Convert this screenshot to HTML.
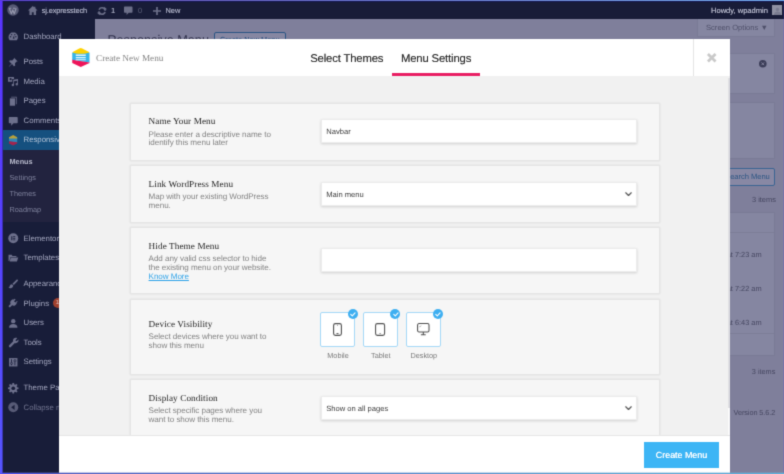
<!DOCTYPE html>
<html lang="en">
<head>
<meta charset="utf-8">
<title>Responsive Menu - Create New Menu</title>
<style>
*{box-sizing:border-box;margin:0;padding:0}
html,body{width:784px;height:474px;overflow:hidden}
body{position:relative;text-rendering:geometricPrecision;font-family:"Liberation Sans",sans-serif;background:#5a40f0;}
#all{position:absolute;left:-4px;top:-4px;width:792px;height:482px;background:#5a40f0;filter:url(#soft)}
#frame{position:absolute;left:4px;top:4px;width:784px;height:474px}
#edge-left{position:absolute;left:-4px;top:-4px;width:7px;height:482px;background:linear-gradient(180deg,#5a34ff 0%,#5642ff 50%,#5656ff 100%)}
#edge-left2{position:absolute;left:2px;top:1px;width:1px;height:472px;background:rgba(26,22,90,.45)}
#edge-top{position:absolute;left:-4px;top:-4px;width:792px;height:5px;background:linear-gradient(90deg,#5a38f0 0,#5a44c8 1.5%,#6458b8 20%,#6670c8 45%,#6e8cd7 72%,#70a8e8 100%)}
#edge-bot{position:absolute;left:-4px;top:473px;width:792px;height:5px;background:linear-gradient(90deg,#5656ff 0,#5860c0 8%,#5c80c8 40%,#64a0cd 72%,#68b0d8 100%)}
#edge-bot2{position:absolute;left:3px;top:472px;width:781px;height:1px;background:linear-gradient(90deg,#5860c0 0,#5c80c8 38%,#64a0cd 72%,#68b0d8 100%);opacity:.35}
.abs{position:absolute}
#shot{position:absolute;left:3px;top:1px;width:781px;height:472px;background:#7f7f9b;overflow:hidden}
svg{position:absolute;overflow:visible}
/* admin bar */
#adminbar{position:absolute;left:0;top:0;width:781px;height:18px;background:linear-gradient(180deg,#121458 0,#181c38 1.6px);color:#a1a4ba;text-shadow:0 0 .3px #a1a4ba;font-size:7.4px;line-height:18px;white-space:nowrap}
#adminbar span{position:absolute;top:.5px}
/* sidebar */
#sidebar{position:absolute;left:0;top:18px;width:91.5px;height:454px;background:#181d39;color:#a4a7bf;font-size:7.8px}
#sidebar .it{position:absolute;left:20.5px;height:12px;line-height:12px;white-space:nowrap}
#sidebar .sub{position:absolute;left:6.5px;font-size:7.3px;color:#7e819c;height:10px;line-height:10px}
#sidebar svg{left:5px;width:10.5px;height:10.5px;fill:#6d708c}
#submenu{position:absolute;left:0;top:131px;width:91.5px;height:72px;background:#22233f}
#current{position:absolute;left:0;top:110.5px;width:91.5px;height:20.5px;background:#15507f}
/* page behind */
.bg-text{position:absolute;color:#454660;font-size:7.6px;white-space:nowrap;line-height:10px}
.bg-text .pre{position:absolute;right:100%;top:0}
.bg-box{position:absolute;border:1px solid #7a7b96;background:#8586a1}
/* modal */
#modal{position:absolute;left:56px;top:38px;width:671px;height:434px;background:#f1f1f1;overflow:hidden}
#mhead{position:absolute;left:0;top:0;width:671px;height:37px;background:#fff}
#mtitle{position:absolute;left:37px;top:13px;font-family:"Liberation Serif",serif;font-size:9.2px;color:#858585;line-height:12px;white-space:nowrap}
.tab{position:absolute;top:12px;font-size:11.3px;color:#2c2c2c;text-shadow:0 0 .5px rgba(0,0,0,.45);line-height:16px;white-space:nowrap;letter-spacing:-.16px}
#uline{position:absolute;left:333px;top:34px;width:88px;height:3px;background:#e91e63}
#closebox{position:absolute;left:634px;top:0;width:37px;height:37px;border-left:1px solid #e4e4e4}
.card{position:absolute;left:71px;width:530px;background:#f6f6f6;border:1px solid #e5e5e5;box-shadow:0 0 2px rgba(0,0,0,.09)}
.ct{position:absolute;left:17.6px;font-family:"Liberation Serif",serif;font-size:9.2px;color:#262626;line-height:12px;white-space:nowrap;letter-spacing:.09px}
.cd{position:absolute;left:17.6px;font-size:8.1px;color:#828282;line-height:8.75px;white-space:nowrap;letter-spacing:-.07px}
.inp{position:absolute;left:189.6px;width:316px;height:24px;background:#fff;border:1px solid #ececec;box-shadow:0 1px 2.5px rgba(0,0,0,.16);font-size:7.6px;color:#3c3c3c;line-height:24px;padding-left:4.6px;white-space:nowrap}
.dev{position:absolute;top:11.5px;width:34.6px;height:35px;border:1px solid #a4d8f7;background:#fff;border-radius:2px}
.chk{position:absolute;right:-3.6px;top:-3.4px;width:10px;height:10px;border-radius:50%;background:#3eaff1}
.dl{position:absolute;top:51px;width:60px;text-align:center;font-size:7.3px;color:#7a7a7a;line-height:9px}
#mfoot{position:absolute;left:0;top:396px;width:671px;height:38px;background:#fff;border-top:1px solid #e6e6e6}
#btn{position:absolute;left:585px;top:5.5px;width:75px;height:26px;background:#3db5f5;color:#fff;font-size:8.9px;line-height:26px;text-shadow:0 0 .5px #fff;text-align:center;white-space:nowrap}
</style>
</head>
<body>
<svg width="0" height="0" style="position:absolute;left:0;top:0" aria-hidden="true"><defs><filter id="soft" x="0" y="0" width="100%" height="100%" color-interpolation-filters="sRGB"><feConvolveMatrix order="3" kernelMatrix="1 5 1 5 25 5 1 5 1" divisor="49" edgeMode="duplicate" preserveAlpha="true"/></filter></defs></svg>
<div id="all"><div id="frame">
<div id="shot">
  <!-- page behind overlay -->
  <div class="bg-text" style="left:104.4px;top:30px;font-size:12.7px;color:#2f304a;line-height:18px">Responsive Menu</div>
  <div class="abs" style="left:211px;top:30.6px;width:72px;height:14px;border:1px solid #2a5483;border-radius:2px;background:#8687a2"></div>
  <div class="bg-text" style="left:217px;top:33.5px;font-size:7.4px;color:#264e7e">Create New Menu</div>
  <div class="bg-box" style="left:694px;top:17px;width:77.5px;height:18.5px;border-top:0"></div>
  <div class="bg-text" style="left:703px;top:21.5px;font-size:7.6px;color:#4f506a">Screen Options ▼</div>
  <div class="bg-box" style="left:715px;top:52px;width:57px;height:40.5px"></div>
  <svg style="left:756.400px;top:58.600px;width:7.600px;height:7.600px" viewBox="0 0 10 10"><circle cx="5" cy="5" r="5" fill="#3a3c57"/><path d="M3.200 3.200l3.600 3.600M6.800 3.200L3.200 6.800" stroke="#8a8aa4" stroke-width="1.200"/></svg>
  <div class="bg-box" style="left:715px;top:101.4px;width:57px;height:57px"></div>
  <div class="abs" style="left:716px;top:167.2px;width:56px;height:17.6px;border:1px solid #3a6492;border-radius:2px;background:#8888a4"></div>
  <div class="bg-text" id="srch" style="left:727.2px;top:171.2px;color:#2c5583;font-size:7.6px;letter-spacing:-.05px"><span class="pre">S</span>earch Menu</div>
  <div class="bg-text" style="left:749px;top:193.8px;font-size:7.4px">3 items</div>
  <div class="bg-box" style="left:715px;top:211.4px;width:57px;height:143.6px"></div>
  <div class="abs" style="left:716px;top:332px;width:55px;height:1px;background:#7c7d97"></div>
  <div class="abs" style="left:716px;top:231px;width:55px;height:1px;background:#7c7d97"></div>
  <div class="bg-text" style="left:727.8px;top:249.3px;font-size:7.4px"><span class="pre">a</span>t 7:23 am</div>
  <div class="bg-text" style="left:727.8px;top:283.3px;font-size:7.4px"><span class="pre">a</span>t 7:22 am</div>
  <div class="bg-text" style="left:727.8px;top:317.3px;font-size:7.4px"><span class="pre">a</span>t 6:43 am</div>
  <div class="bg-text" style="left:748.8px;top:365.6px;font-size:7.3px">3 items</div>
  <div class="bg-text" style="left:730.6px;top:407px;font-size:7.3px;letter-spacing:-.08px">Version 5.6.2</div>

  <div id="adminbar">
    <svg style="left:3.6px;top:3.3px;width:12px;height:12px" viewBox="0 0 24 24"><circle cx="12" cy="12" r="11.5" fill="#575a75"/><path d="M4.500 8.500l4.200 11 2.800-7.500 3 7.500 3.800-11M3.500 8.500h5M12 8.500h4.500" fill="none" stroke="#9698ae" stroke-width="2.200" stroke-linejoin="round"/></svg>
    <svg style="left:25px;top:5px;width:9.5px;height:9px" viewBox="0 0 20 19"><path d="M10 0L0 9.5h3V19h5v-6h4v6h5V9.5h3L15.5 5V1.5h-2.5v1.3z" fill="#6c6f89"/></svg>
    <svg style="left:94px;top:4.6px;width:10px;height:10px" viewBox="0 0 20 20"><circle cx="10" cy="10" r="6.400" fill="none" stroke="#6c6f89" stroke-width="3.200" stroke-dasharray="16.600 3.500" stroke-dashoffset="-2"/><path d="M14.500 1.500l5.500 5-6.500 1.500zM5.500 18.500L0 13.500l6.500-1.500z" fill="#6c6f89"/></svg>
    <svg style="left:121px;top:5px;width:8.5px;height:9.5px" viewBox="0 0 18 20"><path d="M1.500 1h15a1.500 1.500 0 0 1 1.500 1.500v10a1.500 1.500 0 0 1-1.500 1.500H10l-4.500 5v-5h-4A1.500 1.500 0 0 1 0 12.500v-10A1.500 1.500 0 0 1 1.500 1z" fill="#6c6f89"/></svg>
    <svg style="left:149.5px;top:5.5px;width:8px;height:8px" viewBox="0 0 16 16"><path d="M6.300 0h3.400v6.300H16v3.400H9.700V16H6.300V9.700H0V6.300h6.300z" fill="#6c6f89"/></svg>

    <span style="left:38.7px;letter-spacing:-.14px">sj.expresstech</span>
    <span style="left:108px">1</span>
    <span style="left:135px;color:#5c5f79;text-shadow:none">0</span>
    <span style="left:162.5px">New</span>
    <span style="left:708px;color:#b4b6c8;font-size:7.55px">Howdy, wpadmin</span>
    <div class="abs" style="left:769.3px;top:4.3px;width:9.6px;height:9.6px;background:#8f91a2;overflow:hidden"><svg style="left:1.3px;top:1.6px;width:7px;height:8px" viewBox="0 0 14 16"><circle cx="7" cy="5" r="3.400" fill="#7a7c90"/><path d="M0 16c0-5 3-7 7-7s7 2 7 7z" fill="#7a7c90"/></svg></div>
  </div>
  <div id="sidebar">
    <div id="current"></div>
    <div id="submenu"></div>
    <svg style="top:11.95px" viewBox="0 0 20 20"><path d="M10 2.500a9 9 0 0 0-9 9c0 2.300.900 4.500 2.300 6h13.400a8.800 8.800 0 0 0 2.300-6 9 9 0 0 0-9-9z"/><circle cx="5" cy="11" r="1.300" fill="#181d39"/><circle cx="7" cy="7" r="1.300" fill="#181d39"/><circle cx="13" cy="7" r="1.300" fill="#181d39"/><circle cx="15" cy="11" r="1.300" fill="#181d39"/><path d="M9 14.500l2.500-6 .8 6.300z" fill="#181d39"/></svg>
    <svg style="top:37.55px" viewBox="0 0 20 20"><path d="M11.500 1.500l7 7-2 .300-3.200 3.200.4 4.500-2.700 1-3.300-4.300L2 18.500l-.5-.5 5.300-5.700L2.500 9l1-2.700 4.500.4 3.200-3.200z"/></svg>
    <svg style="top:57.25px" viewBox="0 0 20 20"><path d="M1 2h9.500a1 1 0 0 1 1 1v2.500H8v5.500H1a1 1 0 0 1-1-1V3a1 1 0 0 1 1-1z"/><circle cx="5" cy="6" r="2" fill="#181d39"/><path d="M10 7l9-1.500v10.200a2.300 2.300 0 1 1-1.500-2.100V9l-6 1v7a2.300 2.300 0 1 1-1.500-2.100z"/></svg>
    <svg style="top:76.75px" viewBox="0 0 20 20"><path d="M6 1.500h10.500v14H15V3H6z"/><path d="M3.500 4.500h10v14h-10z"/></svg>
    <svg style="top:96.75px" viewBox="0 0 20 20"><path d="M3 2h14a1.500 1.500 0 0 1 1.500 1.500v9A1.500 1.500 0 0 1 17 14h-6.500L6 18.500V14H3a1.500 1.500 0 0 1-1.500-1.500v-9A1.500 1.500 0 0 1 3 2z"/></svg>
    <svg style="top:115.75px;left:6px;width:8.2px;height:10.5px" viewBox="0 0 16 20" preserveAspectRatio="none"><path d="M8 0l8 4.500v3H0v-3z" fill="#b9a23a"/><path d="M0 6.500h16v8L0 12.500z" fill="#2f86b8"/><path d="M0 12l16 2v2L8 20 0 16z" fill="#a3244e"/></svg>
    <svg style="top:214.35px" viewBox="0 0 20 20"><circle cx="10" cy="10" r="9.500"/><path d="M6.300 6h2v8h-2zM9.800 6h4v1.600h-4zM9.800 9.200h4v1.600h-4zM9.800 12.400h4V14h-4z" fill="#181d39"/></svg>
    <svg style="top:233.75px" viewBox="0 0 20 20"><path d="M1 3.500h6l1.500 2H16v2H5L2.500 15H1z"/><path d="M5.500 8.500H19.500L17 16H3z"/></svg>
    <svg style="top:259.95px" viewBox="0 0 20 20"><path d="M18.500 1.500c.8.800.5 1.700 0 2.300L11 11.500 8.500 9l7.700-7.500c.6-.5 1.500-.8 2.300 0zM7.500 10l2.500 2.500c-.2 2-1.300 3.700-3.200 4.500-2 .8-4.300.5-5.800-.5 1.500-.5 2-1.500 2.300-3 .3-1.800 2-3.500 4.200-3.500z"/></svg>
    <svg style="top:278.95px" viewBox="0 0 20 20"><path d="M13 1.500l1.500 1.500-3 3 2.500 2.500 3-3L18.500 7l-2.700 2.700 1 1-2.500 2.500c-2 2-4.500 2-6.500.7L4.500 17.200c-.8.800-2 .8-2.700 0-.8-.8-.8-2 0-2.700L5.100 11.200C3.800 9.200 4 6.700 6 4.700L8.500 2.200l1 1z"/></svg>
    <svg style="top:298.75px" viewBox="0 0 20 20"><circle cx="10" cy="6" r="4.200"/><path d="M2 18.500c0-4.500 3-7 8-7s8 2.500 8 7z"/></svg>
    <svg style="top:318.05px" viewBox="0 0 20 20"><path d="M17.500 2.500l-3 3 .3 2 2 .3 3-3c.6 2 .1 4-1.300 5.400-1.500 1.500-3.600 1.900-5.500 1.200L5.500 19a2.200 2.200 0 0 1-3.200 0 2.200 2.200 0 0 1 0-3.200L9.900 8.300c-.7-1.900-.3-4 1.200-5.500 1.400-1.400 3.400-1.900 5.400-1.300z"/></svg>
    <svg style="top:337.85px" viewBox="0 0 20 20"><path d="M2 2h16v16H2z"/><path d="M6 4.500h1.600v11H6zM12.400 4.500H14v11h-1.600z" fill="#181d39"/><path d="M4.700 11h4.200v2.500H4.700zM11.100 6h4.200v2.500h-4.200z" fill="#6d708c" stroke="#181d39" stroke-width=".8"/></svg>
    <svg style="top:363.55px" viewBox="0 0 20 20"><path d="M8.500 0h3l.5 2.800 1.700.7L16 1.800 18.200 4l-1.700 2.300.7 1.700 2.800.5v3l-2.800.5-.7 1.700 1.700 2.300-2.200 2.200-2.300-1.700-1.700.7-.5 2.800h-3L8 17.200l-1.700-.7L4 18.200 1.800 16l1.700-2.300-.7-1.700L0 11.500v-3L2.800 8l.7-1.700L1.800 4 4 1.800l2.300 1.700L8 2.800z"/><circle cx="10" cy="10" r="3.500" fill="#181d39"/></svg>
    <svg style="top:383.05px" viewBox="0 0 20 20"><circle cx="10" cy="10" r="9.500" fill="#585b77"/><path d="M12.500 5v10L6 10z" fill="#181d39"/></svg>
    
    <div class="it" style="top:11.5px">Dashboard</div>
    <div class="it" style="top:37px">Posts</div>
    <div class="it" style="top:56.5px">Media</div>
    <div class="it" style="top:76px">Pages</div>
    <div class="it" style="top:96px">Comments</div>
    <div class="it" style="top:115px;color:#b5c4d8">Responsive Menu</div>
    <div class="sub" style="top:138px;color:#b9bbcd;font-weight:bold">Menus</div>
    <div class="sub" style="top:154px">Settings</div>
    <div class="sub" style="top:170px">Themes</div>
    <div class="sub" style="top:186px">Roadmap</div>
    <div class="it" style="top:213.5px">Elementor</div>
    <div class="it" style="top:233px">Templates</div>
    <div class="it" style="top:259px">Appearance</div>
    <div class="it" style="top:278.5px">Plugins</div>
    <div class="abs" style="left:49.5px;top:279px;width:10px;height:10px;border-radius:50%;background:#a0412f;color:#d9c3c3;font-size:6px;line-height:10px;text-align:center">1</div>
    <div class="it" style="top:298px">Users</div>
    <div class="it" style="top:317.5px">Tools</div>
    <div class="it" style="top:337px">Settings</div>
    <div class="it" style="top:362.5px">Theme Panel</div>
    <div class="it" style="top:382.5px;color:#71748f">Collapse menu</div>
  </div>

  <div id="modal">
    <div id="mhead">
      <svg style="left:13px;top:8.6px;width:18px;height:19px" viewBox="0 0 36 38" preserveAspectRatio="none"><path d="M17.500 0c1 0 2 .5 3 1L34 8v4L17.500 15 1.500 12V8L14.500 1c1-.5 2-1 3-1z" fill="#ffd200"/><path d="M.5 8.800c5 1.400 9.500 2.700 17 2.700S30 10.200 35 8.800V29L.5 24z" fill="#36b4e8"/><path d="M.5 23.500L35 28.800V30L17.500 38 .5 30z" fill="#ee1459"/><path d="M7.500 13.200h20v2.600h-20zM7.500 17.800h20v2.600h-20zM7.500 22.300h20v2.400h-20z" fill="#e3f5fd"/></svg>
      <div id="mtitle">Create New Menu</div>
      <div class="tab" style="left:251.2px">Select Themes</div>
      <div class="tab" style="left:342px">Menu Settings</div>
      <div id="uline"></div>
      <div id="closebox"><svg style="left:13.3px;top:13.6px;width:9.5px;height:9.5px" viewBox="0 0 10 10"><path d="M1 1l8 8M9 1L1 9" stroke="#c9c9c9" stroke-width="2.9" fill="none"/></svg></div>
    </div>
    <div class="card" style="top:64px;height:58px">
      <div class="ct" style="top:11.2px">Name Your Menu</div>
      <div class="cd" style="top:26.6px">Please enter a descriptive name to<br>identify this menu later</div>
      <div class="inp" style="top:15px">Navbar</div>
    </div>
    <div class="card" style="top:126px;height:58px">
      <div class="ct" style="top:11.5px">Link WordPress Menu</div>
      <div class="cd" style="top:27.1px">Map with your existing WordPress<br>menu.</div>
      <div class="inp" style="top:16px">Main menu<svg style="left:303px;top:9px;width:7px;height:4.500px" viewBox="0 0 14 9"><path d="M1.500 1.500L7 7l5.500-5.500" stroke="#555" stroke-width="2.300" fill="none" stroke-linecap="round" stroke-linejoin="round"/></svg></div>
    </div>
    <div class="card" style="top:188.4px;height:67px">
      <div class="ct" style="top:11.7px">Hide Theme Menu</div>
      <div class="cd" style="top:27.1px">Add any valid css selector to hide<br>the existing menu on your website.<br><span style="color:#2ea2e8;text-decoration:underline">Know More</span></div>
      <div class="inp" style="top:20px"></div>
    </div>
    <div class="card" style="top:260px;height:76px">
      <div class="ct" style="top:17.7px">Device Visibility</div>
      <div class="cd" style="top:33.1px">Select devices where you want to<br>show this menu</div>
      <div class="dev" style="left:189px;width:35px"><svg style="left:12px;top:10.3px;width:9px;height:13px" viewBox="0 0 9 13"><rect x=".6" y=".6" width="7.800" height="11.800" rx="1.800" fill="none" stroke="#505050" stroke-width="1.100"/><path d="M3.500 10.600h2" stroke="#505050" stroke-width="1"/><path d="M4 2.300h1" stroke="#505050" stroke-width=".6"/></svg><div class="chk"><svg style="left:2.1px;top:2.7px;width:5.8px;height:4.8px" viewBox="0 0 12 10"><path d="M1.500 5l3.200 3.200L10.500 1.800" stroke="#fff" stroke-width="2.200" fill="none" stroke-linecap="round" stroke-linejoin="round"/></svg></div></div>
      <div class="dev" style="left:232.3px"><svg style="left:11.2px;top:10.3px;width:10.2px;height:13px" viewBox="0 0 10.500 13" preserveAspectRatio="none"><rect x=".6" y=".6" width="9.300" height="11.800" rx="1.800" fill="none" stroke="#505050" stroke-width="1.100"/><circle cx="5.250" cy="10.500" r=".6" fill="#505050"/></svg><div class="chk"><svg style="left:2.1px;top:2.7px;width:5.8px;height:4.8px" viewBox="0 0 12 10"><path d="M1.500 5l3.200 3.200L10.500 1.800" stroke="#fff" stroke-width="2.200" fill="none" stroke-linecap="round" stroke-linejoin="round"/></svg></div></div>
      <div class="dev" style="left:275.2px"><svg style="left:10.2px;top:10.3px;width:12.6px;height:12.6px" viewBox="0 0 13 13"><rect x=".6" y=".6" width="11.800" height="8.600" rx="1.500" fill="none" stroke="#505050" stroke-width="1.100"/><path d="M6.500 9.200v2.500M4 12.200h5" stroke="#505050" stroke-width="1.100" fill="none"/><path d="M2.500 4.300l1.600-1.600" stroke="#505050" stroke-width=".6"/></svg><div class="chk"><svg style="left:2.1px;top:2.7px;width:5.8px;height:4.8px" viewBox="0 0 12 10"><path d="M1.500 5l3.200 3.200L10.500 1.800" stroke="#fff" stroke-width="2.200" fill="none" stroke-linecap="round" stroke-linejoin="round"/></svg></div></div>
      <div class="dl" style="left:177px">Mobile</div>
      <div class="dl" style="left:219.8px">Tablet</div>
      <div class="dl" style="left:262.8px">Desktop</div>
    </div>
    <div class="card" style="top:340px;height:70px">
      <div class="ct" style="top:11.5px">Display Condition</div>
      <div class="cd" style="top:27.1px">Select specific pages where you<br>want to show this menu.</div>
      <div class="inp" style="top:15.5px">Show on all pages<svg style="left:303px;top:9px;width:7px;height:4.500px" viewBox="0 0 14 9"><path d="M1.500 1.500L7 7l5.500-5.500" stroke="#555" stroke-width="2.300" fill="none" stroke-linecap="round" stroke-linejoin="round"/></svg></div>
    </div>
    <div class="abs" style="left:669.4px;top:39px;width:1.3px;height:330px;background:#e0e0e3"></div>
    <div class="abs" style="left:669.4px;top:369px;width:1.6px;height:30px;background:#fafafa"></div>
    <div id="mfoot"><div id="btn">Create Menu</div></div>
  </div>
</div>
<div id="edge-left"></div>
<div id="edge-left2"></div>
<div id="edge-top"></div>
<div id="edge-bot"></div>
<div id="edge-bot2"></div>
</div></div>
</body>
</html>
